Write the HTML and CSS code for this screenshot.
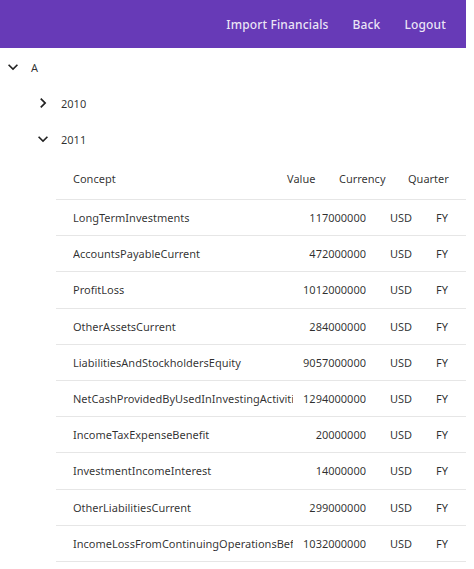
FILE: index.html
```html
<!DOCTYPE html>
<html lang="en">
<head>
  <meta charset="UTF-8">
  <meta name="viewport" content="width=device-width, initial-scale=1.0">
  <title>Financials</title>
  <link rel="stylesheet" href="styles.css">
</head>
<body>
  <div class="page">
    <!-- 顶部工具栏 -->
    <div class="toolbar">
      <a class="tb-btn" href="#">Import Financials</a>
      <a class="tb-btn" href="#">Back</a>
      <a class="tb-btn" href="#">Logout</a>
    </div>

    <!-- 树 -->
    <div class="tree">
      <div class="node lvl0">
        <svg class="chev" viewBox="0 0 24 24"><path d="M16.59 8.59L12 13.17 7.41 8.59 6 10l6 6 6-6z"/></svg>
        <span>A</span>
      </div>
      <div class="node lvl1">
        <svg class="chev" viewBox="0 0 24 24"><path d="M10 6L8.59 7.41 13.17 12l-4.58 4.59L10 18l6-6z"/></svg>
        <span>2010</span>
      </div>
      <div class="node lvl1">
        <svg class="chev" viewBox="0 0 24 24"><path d="M16.59 8.59L12 13.17 7.41 8.59 6 10l6 6 6-6z"/></svg>
        <span>2011</span>
      </div>

      <!-- 表格 -->
      <div class="table">
        <div class="head">
          <div>Concept</div>
          <div>Value</div>
          <div>Currency</div>
          <div>Quarter</div>
        </div>
        <div class="row"><div class="c">LongTermInvestments</div><div class="v">117000000</div><div class="u">USD</div><div class="q">FY</div></div>
        <div class="row"><div class="c">AccountsPayableCurrent</div><div class="v">472000000</div><div class="u">USD</div><div class="q">FY</div></div>
        <div class="row"><div class="c">ProfitLoss</div><div class="v">1012000000</div><div class="u">USD</div><div class="q">FY</div></div>
        <div class="row"><div class="c">OtherAssetsCurrent</div><div class="v">284000000</div><div class="u">USD</div><div class="q">FY</div></div>
        <div class="row"><div class="c">LiabilitiesAndStockholdersEquity</div><div class="v">9057000000</div><div class="u">USD</div><div class="q">FY</div></div>
        <div class="row"><div class="c">NetCashProvidedByUsedInInvestingActivities</div><div class="v">1294000000</div><div class="u">USD</div><div class="q">FY</div></div>
        <div class="row"><div class="c">IncomeTaxExpenseBenefit</div><div class="v">20000000</div><div class="u">USD</div><div class="q">FY</div></div>
        <div class="row"><div class="c">InvestmentIncomeInterest</div><div class="v">14000000</div><div class="u">USD</div><div class="q">FY</div></div>
        <div class="row"><div class="c">OtherLiabilitiesCurrent</div><div class="v">299000000</div><div class="u">USD</div><div class="q">FY</div></div>
        <div class="row"><div class="c">IncomeLossFromContinuingOperationsBeforeIncomeTaxes</div><div class="v">1032000000</div><div class="u">USD</div><div class="q">FY</div></div>
        <div class="row"><div class="c">Revenues</div><div class="v">9000000000</div><div class="u">USD</div><div class="q">FY</div></div>
      </div>
    </div>
  </div>
</body>
</html>
```

FILE: styles.css
```css
body {
    margin: 0;
    background: #fff;
    font-family: "Noto Sans", "Open Sans", sans-serif;
    color: rgba(0, 0, 0, 0.82);
    overflow: hidden;
}

.page {
    width: 466px;
}

/* 工具栏 */
.toolbar {
    height: 48px;
    background: #673ab7;
    display: flex;
    justify-content: flex-end;
    align-items: center;
    padding-right: 8px;
    padding-top: 1px;
    box-sizing: border-box;
}

.tb-btn {
    color: rgba(255, 255, 255, 0.88);
    text-decoration: none;
    font-size: 12px;
    font-weight: 500;
    letter-spacing: 0.15px;
    padding: 0 12px;
    line-height: 36px;
}

/* 树节点 */
.tree {
    padding-top: 1px;
}

.node {
    height: 36px;
    display: flex;
    align-items: center;
    font-size: 11px;
}

.node.lvl0 {
    padding-left: 3px;
}

.node.lvl1 {
    padding-left: 33px;
}

.chev {
    width: 20px;
    height: 20px;
    margin-right: 8px;
    fill: #222;
}

/* 表格 */
.table {
    margin-left: 56px;
    font-size: 11px;
}

.head,
.row {
    display: grid;
    align-items: center;
    padding-left: 17px;
    border-bottom: 1px solid #e6e6e6;
}

.head {
    height: 42px;
    grid-template-columns: 214px 52px 69px 1fr;
}

.row {
    height: 35.2px;
    grid-template-columns: 220px 73px 70px 1fr;
}

.row .c {
    overflow: hidden;
    white-space: nowrap;
}

.row .v {
    text-align: right;
}

.row .u {
    padding-left: 24px;
}
```
